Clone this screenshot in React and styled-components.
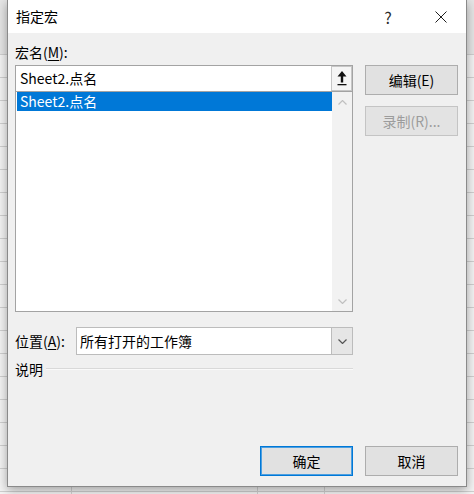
import React from 'react';
import styled, { createGlobalStyle } from 'styled-components';

const GlobalStyle = createGlobalStyle`
  html, body { margin: 0; padding: 0; }
  body { font-family: "Noto Sans CJK SC", sans-serif; color: #000; }
`;

const Desktop = styled.div`
  width: 474px;
  height: 494px;
  overflow: hidden;
  box-sizing: border-box;
  padding-left: 7px;
  background-color: #f4f4f4;
  background-image:
    linear-gradient(to right, transparent 71px, #d2d2d2 71px, #d2d2d2 72px, transparent 72px),
    linear-gradient(to right, transparent 257px, #d2d2d2 257px, #d2d2d2 258px, transparent 258px),
    linear-gradient(to right, transparent 324px, #d2d2d2 324px, #d2d2d2 325px, transparent 325px),
    linear-gradient(to bottom, #e6e6e6 0, #e6e6e6 54px, transparent 54px),
    repeating-linear-gradient(to bottom, transparent 0, transparent 22px, #d0d0d0 22px, #d0d0d0 23px);
  background-position: 0 0, 0 0, 0 0, 0 0, 0 9px;
`;

const Dialog = styled.div`
  width: 460px;
  height: 487px;
  box-sizing: border-box;
  border: 1px solid #8a8a8a;
  border-top: none;
  background: #f0f0f0;
  box-shadow: 0 3px 10px rgba(0, 0, 0, 0.35);
  display: flex;
  flex-direction: column;
`;

const TitleBar = styled.div`
  height: 33px;
  flex: none;
  background: #ffffff;
  display: flex;
  align-items: center;
  padding-left: 8px;
  font-size: 14px;
`;

const TitleText = styled.div`
  flex: 1;
  line-height: 33px;
`;

const CaptionButton = styled.div`
  width: 50px;
  height: 33px;
  margin-left: ${p => p.$gap || 0}px;
  display: flex;
  align-items: center;
  justify-content: center;
  font-size: 16px;
  color: #2b2b2b;
`;

const Body = styled.div`
  flex: 1;
  display: flex;
  flex-direction: column;
  padding: 8px 8px 10px 7px;
`;

const MainRow = styled.div`
  display: flex;
  gap: 12px;
`;

const LeftCol = styled.div`
  width: 338px;
  display: flex;
  flex-direction: column;
`;

const RightCol = styled.div`
  width: 93px;
  padding-top: 24px;
  display: flex;
  flex-direction: column;
  gap: 11px;
`;

const Label = styled.div`
  font-size: 14px;
  line-height: ${p => p.$lh || 22}px;
  height: ${p => p.$lh || 22}px;
  width: ${p => (p.$w ? `${p.$w}px` : 'auto')};
  flex: none;
  white-space: nowrap;
  u { text-decoration: underline; text-underline-offset: 2px; }
`;

const NameInput = styled.div`
  margin-top: 2px;
  height: 27px;
  box-sizing: border-box;
  border: 1px solid #a3a3a3;
  background: #ffffff;
  display: flex;
  align-items: stretch;
`;

const InputText = styled.div`
  flex: 1;
  padding-left: 4px;
  font-size: 14px;
  line-height: 25px;
`;

const UpButton = styled.div`
  width: 21px;
  box-sizing: border-box;
  border: 1px solid #c6c6c6;
  background: #f5f5f5;
  display: flex;
  align-items: center;
  justify-content: center;
`;

const ListBox = styled.div`
  height: 220px;
  box-sizing: border-box;
  border: 1px solid #a3a3a3;
  border-top: none;
  background: #ffffff;
  display: flex;
  padding-left: 1px;
`;

const Items = styled.div`
  flex: 1;
`;

const Item = styled.div`
  height: 19px;
  line-height: 19px;
  padding-left: 3px;
  font-size: 14px;
  background: ${p => (p.$selected ? '#0078d7' : 'transparent')};
  color: ${p => (p.$selected ? '#ffffff' : '#000000')};
`;

const ScrollBar = styled.div`
  width: 20px;
  background: #f2f2f2;
  display: flex;
  flex-direction: column;
  justify-content: space-between;
`;

const ScrollArrow = styled.div`
  height: 20px;
  display: flex;
  align-items: center;
  justify-content: center;
`;

const Button = styled.div`
  width: 93px;
  height: 30px;
  box-sizing: border-box;
  border: 1px solid ${p => (p.$default ? '#0078d7' : p.$disabled ? '#c4c4c4' : '#adadad')};
  box-shadow: ${p => (p.$default ? 'inset 0 0 0 1px #4d9fe0' : 'none')};
  background: ${p => (p.$disabled ? '#e3e3e3' : '#e1e1e1')};
  color: ${p => (p.$disabled ? '#9c9c9c' : '#000000')};
  font-size: 14px;
  display: flex;
  align-items: center;
  justify-content: center;
`;

const LocationRow = styled.div`
  margin-top: 15px;
  width: 338px;
  height: 28px;
  display: flex;
  align-items: center;
`;

const Combo = styled.div`
  flex: 1;
  height: 28px;
  box-sizing: border-box;
  border: 1px solid #bcbcbc;
  background: #ffffff;
  display: flex;
`;

const ComboText = styled.div`
  flex: 1;
  padding-left: 3px;
  font-size: 14px;
  line-height: 26px;
`;

const DropButton = styled.div`
  width: 20px;
  border-left: 1px solid #bcbcbc;
  background: #e6e6e6;
  display: flex;
  align-items: center;
  justify-content: center;
`;

const DescRow = styled.div`
  margin-top: 4px;
  width: 338px;
  display: flex;
  align-items: center;
  gap: 3px;
`;

const Separator = styled.div`
  flex: 1;
  height: 1px;
  background: #d9d9d9;
  border-bottom: 1px solid #fafafa;
`;

const Spacer = styled.div`
  flex: 1;
`;

const Footer = styled.div`
  display: flex;
  justify-content: flex-end;
  gap: 12px;
`;

const Chevron = ({ down, color }) => (
  <svg width="9" height="5" viewBox="0 0 9 5">
    <polyline
      points={down ? '0.5,0.5 4.5,4.5 8.5,0.5' : '0.5,4.5 4.5,0.5 8.5,4.5'}
      fill="none"
      stroke={color}
      strokeWidth="1.2"
    />
  </svg>
);

const App = () => {
  return (
    <Desktop>
      <GlobalStyle />
      <Dialog>
        <TitleBar>
          <TitleText>指定宏</TitleText>
          <CaptionButton>?</CaptionButton>
          <CaptionButton $gap={3}>
            <svg width="12" height="12" viewBox="0 0 12 12">
              <path d="M0.5 0.5 L11.5 11.5 M11.5 0.5 L0.5 11.5" stroke="#1f1f1f" strokeWidth="1" />
            </svg>
          </CaptionButton>
        </TitleBar>
        <Body>
          <MainRow>
            <LeftCol>
              <Label>宏名(<u>M</u>):</Label>
              <NameInput>
                <InputText>Sheet2.点名</InputText>
                <UpButton>
                  <svg width="10" height="15" viewBox="0 0 10 15">
                    <path d="M5 0 L9.5 5.5 L6.2 5.5 L6.2 11.5 L3.8 11.5 L3.8 5.5 L0.5 5.5 Z" fill="#111" />
                    <rect x="0.5" y="13" width="9" height="1.3" fill="#111" />
                  </svg>
                </UpButton>
              </NameInput>
              <ListBox>
                <Items>
                  <Item $selected>Sheet2.点名</Item>
                </Items>
                <ScrollBar>
                  <ScrollArrow><Chevron color="#c0c0c0" /></ScrollArrow>
                  <ScrollArrow><Chevron down color="#c0c0c0" /></ScrollArrow>
                </ScrollBar>
              </ListBox>
            </LeftCol>
            <RightCol>
              <Button>编辑(E)</Button>
              <Button $disabled>录制(R)...</Button>
            </RightCol>
          </MainRow>
          <LocationRow>
            <Label $w={61} $lh={28}>位置(<u>A</u>):</Label>
            <Combo>
              <ComboText>所有打开的工作簿</ComboText>
              <DropButton><Chevron down color="#555555" /></DropButton>
            </Combo>
          </LocationRow>
          <DescRow>
            <Label $lh={20}>说明</Label>
            <Separator />
          </DescRow>
          <Spacer />
          <Footer>
            <Button $default>确定</Button>
            <Button>取消</Button>
          </Footer>
        </Body>
      </Dialog>
    </Desktop>
  );
};

export default App;
